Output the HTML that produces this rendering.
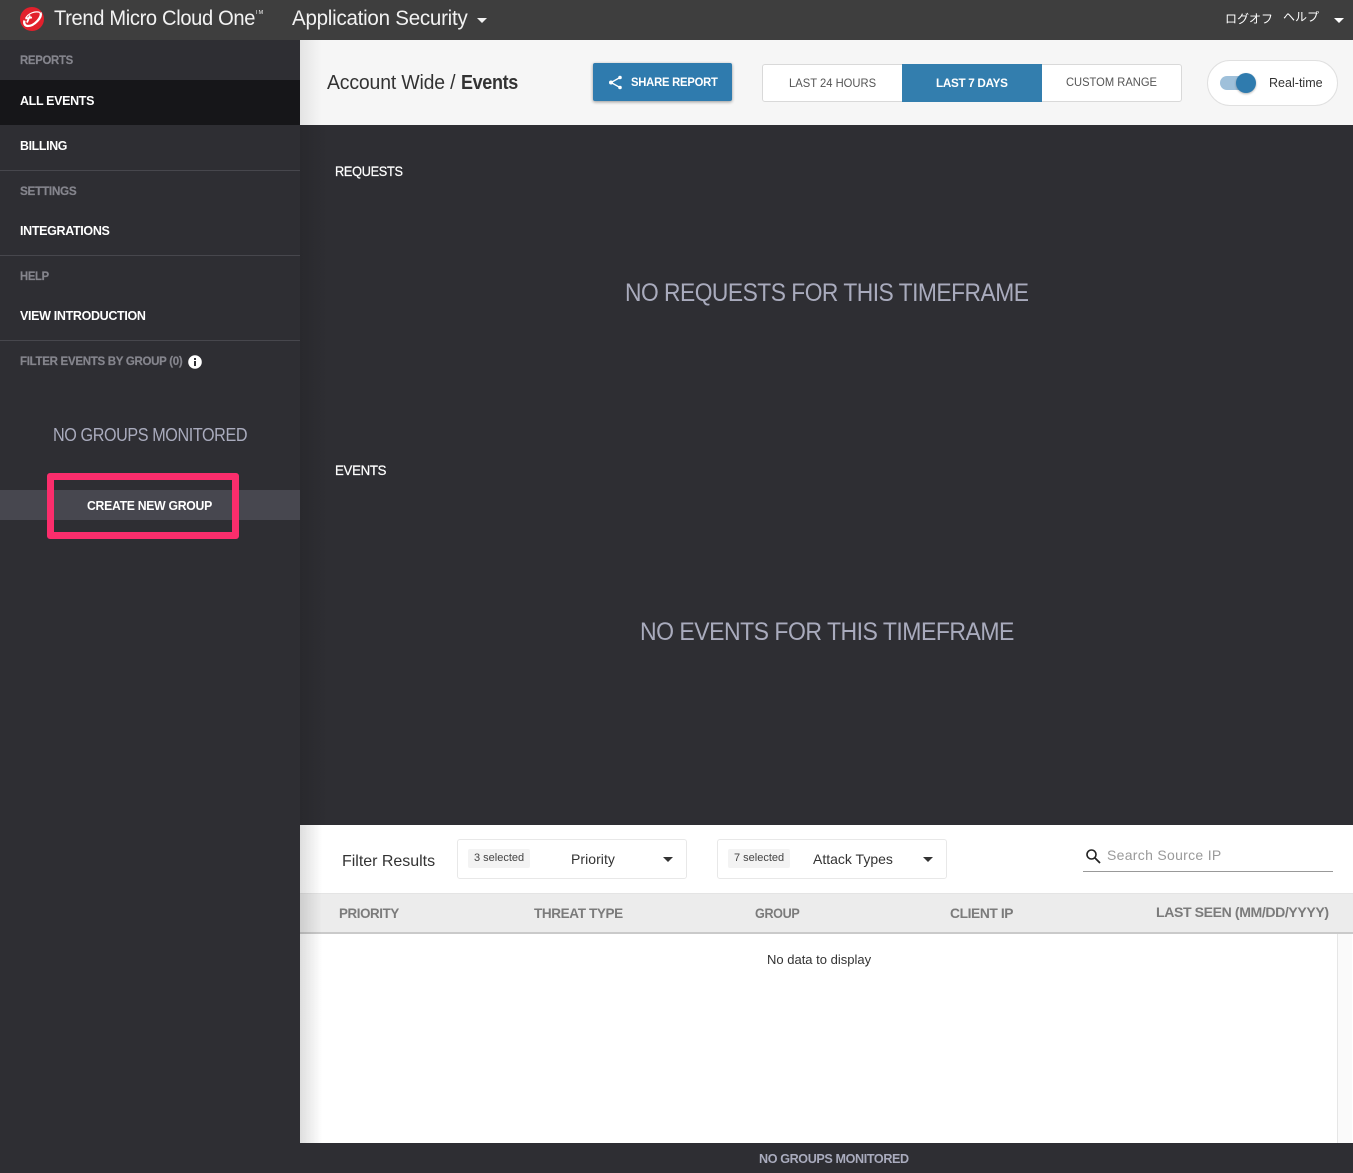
<!DOCTYPE html>
<html lang="en">
<head>
<meta charset="utf-8">
<title>Trend Micro Cloud One</title>
<style>
html,body{margin:0;padding:0;width:1353px;height:1173px;overflow:hidden;background:#2e2e33;}
body{position:relative;font-family:"Liberation Sans","Noto Sans CJK JP",sans-serif;}
.a{position:absolute;}
.t{position:absolute;white-space:nowrap;line-height:1;transform-origin:0 50%;}
.n{color:#fff;font-size:13px;font-weight:bold;letter-spacing:-.35px;}
.h{color:#85858d;font-size:12px;font-weight:bold;letter-spacing:-.3px;-webkit-text-stroke:.2px #85858d;}
.line{position:absolute;left:0;width:300px;height:1px;background:#47474d;}
.th{color:#7b7b7b;font-size:14px;font-weight:bold;letter-spacing:-.4px;}
.big{color:#a9abbd;font-size:25px;letter-spacing:-.55px;}
</style>
</head>
<body>
<!-- top bar -->
<div class="a" style="left:0;top:0;width:1353px;height:40px;background:#3e3e3e;"></div>
<svg class="a" style="left:19px;top:6px" width="26" height="26" viewBox="0 0 26 26">
<circle cx="13" cy="13" r="12" fill="#e2202c"/>
<path d="M21 6.500C16 4.500 9 7.500 6.500 12.500" fill="none" stroke="#fff" stroke-width="1.200"/>
<path d="M21.500 6.500C23.500 11.500 15 20 9 20C6 20 4.500 17.500 5.500 14.500" fill="none" stroke="#fff" stroke-width="2.300"/>
<path d="M11 9.500L8 16.500M6.500 12.500L13 11.500" fill="none" stroke="#fff" stroke-width="1.800"/>
</svg>
<span class="t" style="left:54px;top:8px;color:#f2f2f2;font-size:21px;letter-spacing:-.35px;transform:scaleX(.957);">Trend Micro Cloud One</span>
<span class="t" style="left:255px;top:10px;color:#f2f2f2;font-size:6px;transform:scaleX(.95);">TM</span>
<span class="t" style="left:292px;top:8px;color:#f2f2f2;font-size:21px;letter-spacing:-.25px;transform:scaleX(.978);">Application Security</span>
<div class="a" style="left:477px;top:18px;width:0;height:0;border-left:5px solid transparent;border-right:5px solid transparent;border-top:5px solid #f2f2f2;"></div>
<span class="t" style="left:1225px;top:13px;color:#fff;font-size:12px;">ログオフ</span>
<span class="t" style="left:1283px;top:11px;color:#fff;font-size:12px;">ヘルプ</span>
<div class="a" style="left:1334px;top:18px;width:0;height:0;border-left:5px solid transparent;border-right:5px solid transparent;border-top:5px solid #fff;"></div>

<!-- sidebar -->
<div class="a" style="left:0;top:40px;width:300px;height:1133px;background:#2e2e33;"></div>
<span class="t h" style="left:20px;top:54px;transform:scaleX(.946);">REPORTS</span>
<div class="a" style="left:0;top:80px;width:300px;height:45px;background:#161619;"></div>
<span class="t n" style="left:20px;top:94px;transform:scaleX(.96);">ALL EVENTS</span>
<span class="t n" style="left:20px;top:139px;transform:scaleX(.95);">BILLING</span>
<div class="line" style="top:170px;"></div>
<span class="t h" style="left:20px;top:185px;transform:scaleX(.98);">SETTINGS</span>
<span class="t n" style="left:20px;top:224px;transform:scaleX(.962);">INTEGRATIONS</span>
<div class="line" style="top:255px;"></div>
<span class="t h" style="left:20px;top:270px;transform:scaleX(.935);">HELP</span>
<span class="t n" style="left:20px;top:309px;transform:scaleX(.962);">VIEW INTRODUCTION</span>
<div class="line" style="top:340px;"></div>
<span class="t h" style="left:20px;top:355px;transform:scaleX(.958);">FILTER EVENTS BY GROUP (0)</span>
<svg class="a" style="left:188px;top:355px" width="14" height="14" viewBox="0 0 14 14">
<circle cx="7" cy="7" r="6.800" fill="#fff"/>
<rect x="6" y="6" width="2" height="5" fill="#2e2e33"/>
<rect x="6" y="3" width="2" height="2" fill="#2e2e33"/>
</svg>
<span class="t" style="left:53px;top:426px;color:#a9abbd;font-size:18px;letter-spacing:-.45px;transform:scaleX(.898);">NO GROUPS MONITORED</span>
<div class="a" style="left:0;top:490px;width:300px;height:30px;background:#47474f;"></div>
<span class="t n" style="left:87px;top:499px;font-size:13px;letter-spacing:-.3px;transform:scaleX(.94);">CREATE NEW GROUP</span>
<div class="a" style="left:46.700px;top:473px;width:192px;height:66px;box-sizing:border-box;border:7px solid #fb2d6c;border-radius:3px;"></div>

<!-- header -->
<div class="a" style="left:300px;top:40px;width:1053px;height:85px;background:#f6f6f6;"></div>
<div class="a" style="left:300px;top:40px;width:22px;height:85px;background:linear-gradient(90deg,#e4e4e4,rgba(246,246,246,0));"></div>
<span class="t" style="left:327px;top:73px;color:#333;font-size:20px;letter-spacing:-.15px;transform:scaleX(.97);">Account Wide /</span>
<span class="t" style="left:461px;top:73px;color:#333;font-size:20px;font-weight:bold;letter-spacing:-.4px;transform:scaleX(.9);">Events</span>
<div class="a" style="left:593px;top:63px;width:139px;height:38px;background:#2f7bae;border-radius:2px;box-shadow:0 1px 3px rgba(0,0,0,.4);"></div>
<svg class="a" style="left:608px;top:75px" width="15" height="15" viewBox="0 0 15 15">
<path d="M12 2.500L3 7.500L12 12.500" fill="none" stroke="#fff" stroke-width="1.300"/>
<circle cx="12" cy="2.500" r="1.800" fill="#fff"/><circle cx="3" cy="7.500" r="2" fill="#fff"/><circle cx="12" cy="12.500" r="1.800" fill="#fff"/>
</svg>
<span class="t" style="left:631px;top:76px;color:#fff;font-size:12px;font-weight:bold;letter-spacing:-.22px;transform:scaleX(.935);">SHARE REPORT</span>
<div class="a" style="left:762px;top:64px;width:420px;height:38px;box-sizing:border-box;background:#fff;border:1px solid #d9d9d9;border-radius:3px;"></div>
<div class="a" style="left:902px;top:64px;width:140px;height:38px;background:#337eae;"></div>
<span class="t" style="left:789px;top:77px;color:#555;font-size:12px;transform:scaleX(.935);">LAST 24 HOURS</span>
<span class="t" style="left:936px;top:77px;color:#fff;font-size:12px;font-weight:bold;letter-spacing:-.3px;transform:scaleX(.973);">LAST 7 DAYS</span>
<span class="t" style="left:1066px;top:76px;color:#555;font-size:12px;transform:scaleX(.93);">CUSTOM RANGE</span>
<div class="a" style="left:1207px;top:60px;width:131px;height:46px;box-sizing:border-box;background:#fff;border:1px solid #e0e0e0;border-radius:23px;"></div>
<div class="a" style="left:1220px;top:76px;width:34px;height:14px;background:#9fc0da;border-radius:7px;"></div>
<div class="a" style="left:1236px;top:73px;width:20px;height:20px;background:#2f7bae;border-radius:50%;box-shadow:0 1px 2px rgba(0,0,0,.3);"></div>
<span class="t" style="left:1269px;top:76px;color:#333;font-size:13px;transform:scaleX(.964);">Real-time</span>

<!-- main -->
<div class="a" style="left:300px;top:125px;width:28px;height:700px;background:linear-gradient(90deg,#29292d,rgba(46,46,51,0));"></div>
<span class="t" style="left:335px;top:164px;color:#fff;font-size:14px;letter-spacing:-.3px;transform:scaleX(.907);-webkit-text-stroke:.25px #fff;">REQUESTS</span>
<span class="t big" style="left:625px;top:281px;transform:scaleX(.912);">NO REQUESTS FOR THIS TIMEFRAME</span>
<span class="t" style="left:335px;top:463px;color:#fff;font-size:14px;letter-spacing:-.3px;transform:scaleX(.944);-webkit-text-stroke:.25px #fff;">EVENTS</span>
<span class="t big" style="left:640px;top:620px;transform:scaleX(.921);">NO EVENTS FOR THIS TIMEFRAME</span>

<!-- bottom panel -->
<div class="a" style="left:300px;top:825px;width:1053px;height:318px;background:#fff;"></div>
<span class="t" style="left:342px;top:854px;color:#333;font-size:16px;letter-spacing:-.02px;">Filter Results</span>
<div class="a" style="left:457px;top:839px;width:230px;height:40px;box-sizing:border-box;border:1px solid #e8e8e8;border-radius:3px;"></div>
<div class="a" style="left:468px;top:849px;width:62px;height:19px;background:#f3f3f3;border-radius:2px;"></div>
<span class="t" style="left:474px;top:853px;color:#444;font-size:11px;">3 selected</span>
<span class="t" style="left:571px;top:852px;color:#333;font-size:14px;letter-spacing:.05px;">Priority</span>
<div class="a" style="left:663px;top:857px;width:0;height:0;border-left:5px solid transparent;border-right:5px solid transparent;border-top:5px solid #333;"></div>
<div class="a" style="left:717px;top:839px;width:230px;height:40px;box-sizing:border-box;border:1px solid #e8e8e8;border-radius:3px;"></div>
<div class="a" style="left:728px;top:849px;width:62px;height:19px;background:#f3f3f3;border-radius:2px;"></div>
<span class="t" style="left:734px;top:853px;color:#444;font-size:11px;">7 selected</span>
<span class="t" style="left:813px;top:852px;color:#333;font-size:14px;">Attack Types</span>
<div class="a" style="left:923px;top:857px;width:0;height:0;border-left:5px solid transparent;border-right:5px solid transparent;border-top:5px solid #333;"></div>
<svg class="a" style="left:1085px;top:848px" width="16" height="16" viewBox="0 0 16 16">
<circle cx="6.500" cy="6.500" r="4.500" fill="none" stroke="#222" stroke-width="1.600"/>
<path d="M10 10L15 15" stroke="#222" stroke-width="1.800"/>
</svg>
<span class="t" style="left:1107px;top:848px;color:#9a9a9a;font-size:14px;letter-spacing:.3px;">Search Source IP</span>
<div class="a" style="left:1083px;top:871px;width:250px;height:1px;background:#999;"></div>

<div class="a" style="left:300px;top:893px;width:1053px;height:38px;background:#ececec;border-top:1px solid #e4e4e4;"></div>
<div class="a" style="left:300px;top:932px;width:1053px;height:2px;background:#cacaca;"></div>
<span class="t th" style="left:339px;top:906px;transform:scaleX(.952);">PRIORITY</span>
<span class="t th" style="left:534px;top:906px;transform:scaleX(.967);">THREAT TYPE</span>
<span class="t th" style="left:755px;top:906px;transform:scaleX(.9);">GROUP</span>
<span class="t th" style="left:950px;top:906px;transform:scaleX(.985);">CLIENT IP</span>
<span class="t th" style="left:1156px;top:905px;transform:scaleX(1.006);">LAST SEEN (MM/DD/YYYY)</span>
<span class="t" style="left:767px;top:953px;color:#333;font-size:13px;">No data to display</span>
<div class="a" style="left:1337px;top:934px;width:15px;height:209px;box-sizing:border-box;background:#fafafa;border-left:1px solid #e6e6e6;"></div>
<div class="a" style="left:300px;top:825px;width:22px;height:318px;background:linear-gradient(90deg,rgba(0,0,0,.13),rgba(0,0,0,0));"></div>

<!-- footer -->
<div class="a" style="left:300px;top:1143px;width:1053px;height:30px;background:#2e2e33;"></div>
<span class="t" style="left:759px;top:1152px;color:#a9abbd;font-size:13px;font-weight:bold;letter-spacing:-.4px;transform:scaleX(.968);">NO GROUPS MONITORED</span>
</body>
</html>
